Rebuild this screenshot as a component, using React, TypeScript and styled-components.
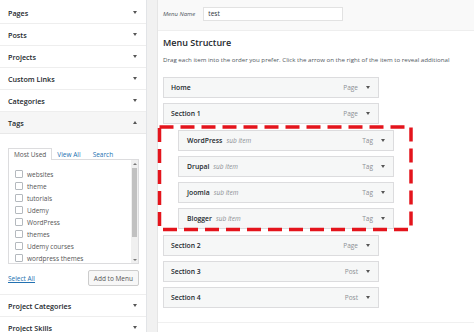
import React, { FC } from "react"
import styled, { createGlobalStyle } from "styled-components"

const GlobalStyle = createGlobalStyle`
  html, body {
    margin: 0;
    padding: 0;
    background: #f1f1f1;
    font-family: "Open Sans", "Noto Sans", sans-serif;
    color: #23282d;
  }
  * { box-sizing: border-box; }
`

const sidebarSections = ["Pages", "Posts", "Projects", "Custom Links", "Categories"]
const tags = [
  "websites",
  "theme",
  "tutorials",
  "Udemy",
  "WordPress",
  "themes",
  "Udemy courses",
  "wordpress themes",
]

interface MenuEntry {
  title: string
  type: string
  sub?: boolean
}

const menuItems: MenuEntry[] = [
  { title: "Home", type: "Page" },
  { title: "Section 1", type: "Page" },
  { title: "WordPress", type: "Tag", sub: true },
  { title: "Drupal", type: "Tag", sub: true },
  { title: "Joomla", type: "Tag", sub: true },
  { title: "Blogger", type: "Tag", sub: true },
  { title: "Section 2", type: "Page" },
  { title: "Section 3", type: "Post" },
  { title: "Section 4", type: "Post" },
]

const Caret: FC<{ up?: boolean }> = ({ up }) => <Arrow $up={up} />

const App: FC = () => {
  return (
    <Page>
      <GlobalStyle />
      <Sidebar>
        {sidebarSections.map(name => (
          <SectionRow key={name}>
            <span>{name}</span>
            <Caret />
          </SectionRow>
        ))}
        <SectionRow $open>
          <span>Tags</span>
          <Caret up />
        </SectionRow>
        <TagsBody>
          <Tabs>
            <Tab $active>Most Used</Tab>
            <Tab>View All</Tab>
            <Tab>Search</Tab>
          </Tabs>
          <TagPanel>
            <TagList>
              {tags.map(tag => (
                <TagItem key={tag}>
                  <Checkbox />
                  {tag}
                </TagItem>
              ))}
            </TagList>
            <Scrollbar>
              <ScrollArrow>
                <Arrow $up $small />
              </ScrollArrow>
              <Thumb />
              <ScrollArrow>
                <Arrow $small />
              </ScrollArrow>
            </Scrollbar>
          </TagPanel>
          <TagActions>
            <SelectAll>Select All</SelectAll>
            <AddButton>Add to Menu</AddButton>
          </TagActions>
        </TagsBody>
        <SectionRow>
          <span>Project Categories</span>
          <Caret />
        </SectionRow>
        <SectionRow>
          <span>Project Skills</span>
          <Caret />
        </SectionRow>
      </Sidebar>

      <Main>
        <Header>
          <NameLabel>Menu Name</NameLabel>
          <NameInput>test</NameInput>
        </Header>
        <Body>
          <Heading>Menu Structure</Heading>
          <Description>
            Drag each item into the order you prefer. Click the arrow on the right of the item to reveal additional
          </Description>
          <ItemList>
            {menuItems.map(item => (
              <MenuItem key={item.title} $sub={item.sub}>
                <ItemTitle>
                  {item.title}
                  {item.sub && <SubNote>sub item</SubNote>}
                </ItemTitle>
                <ItemControls>
                  <ItemType>{item.type}</ItemType>
                  <Caret />
                </ItemControls>
              </MenuItem>
            ))}
          </ItemList>
        </Body>
        <Footer />
      </Main>

      <Highlight width="474" height="332" viewBox="0 0 474 332">
        <rect
          x="159.5"
          y="127"
          width="251.5"
          height="102.5"
          fill="none"
          stroke="#e4141c"
          strokeWidth="3.5"
          strokeDasharray="14 7"
        />
      </Highlight>
    </Page>
  )
}

const Page = styled.div`
  position: relative;
  display: flex;
  gap: 10px;
  width: 474px;
  height: 332px;
  overflow: hidden;
`

const Sidebar = styled.aside`
  flex: 0 0 147px;
  padding-top: 2px;
  background: #fff;
  border-right: 1px solid #e2e4e7;
`

const SectionRow = styled.div<{ $open?: boolean }>`
  display: flex;
  align-items: center;
  justify-content: space-between;
  height: 22px;
  padding: 0 9px 0 8px;
  border-bottom: 1px solid ${p => (p.$open ? "#e8e8e8" : "#eeeeee")};
  background: ${p => (p.$open ? "#f6f6f6" : "#fff")};
  font-size: 7.2px;
  font-weight: 600;
  color: #23282d;
`

const Arrow = styled.i<{ $up?: boolean; $small?: boolean }>`
  display: block;
  width: 0;
  height: 0;
  border-left: ${p => (p.$small ? 2 : 2.5)}px solid transparent;
  border-right: ${p => (p.$small ? 2 : 2.5)}px solid transparent;
  ${p => (p.$up ? "border-bottom" : "border-top")}: ${p => (p.$small ? 2 : 3)}px solid
    ${p => (p.$small ? "#777" : "#555")};
`

const TagsBody = styled.div`
  padding: 13px 7px 8px 8px;
  border-bottom: 1px solid #eeeeee;
`

const Tabs = styled.div`
  display: flex;
  align-items: flex-end;
  gap: 4px;
  height: 12px;
`

const Tab = styled.div<{ $active?: boolean }>`
  position: relative;
  display: flex;
  align-items: center;
  height: 12px;
  margin-bottom: -1px;
  padding: 0 ${p => (p.$active ? 5 : 0)}px;
  font-size: 6.5px;
  color: ${p => (p.$active ? "#555" : "#2271b1")};
  background: ${p => (p.$active ? "#fff" : "transparent")};
  border: 1px solid ${p => (p.$active ? "#dcdcde" : "transparent")};
  border-bottom: none;
  &:last-child {
    margin-left: 6px;
  }
`

const TagPanel = styled.div`
  display: flex;
  height: 105px;
  border: 1px solid #dcdcde;
  background: #fff;
`

const TagList = styled.ul`
  flex: 1;
  margin: 0;
  padding: 8px 0 0 6px;
  list-style: none;
  overflow: hidden;
`

const TagItem = styled.li`
  display: flex;
  align-items: center;
  gap: 4px;
  height: 12px;
  font-size: 6.5px;
  color: #555555;
`

const Checkbox = styled.span`
  width: 8px;
  height: 8px;
  border: 1px solid #b4b9be;
  background: #fff;
  border-radius: 1px;
`

const Scrollbar = styled.div`
  display: flex;
  flex-direction: column;
  width: 7px;
  background: #f0f0f0;
`

const ScrollArrow = styled.div`
  height: 7px;
  display: flex;
  align-items: center;
  justify-content: center;
`

const Thumb = styled.div`
  height: 69px;
  margin: 1px 1px 0;
  background: #c1c1c1;
  flex: 0 0 auto;
  & + div {
    margin-top: auto;
  }
`

const TagActions = styled.div`
  display: flex;
  align-items: center;
  justify-content: space-between;
  margin-top: 6px;
`

const SelectAll = styled.a`
  font-size: 6.5px;
  color: #2271b1;
  text-decoration: underline;
`

const AddButton = styled.button`
  height: 16px;
  padding: 0 5px;
  font-family: inherit;
  font-size: 6.5px;
  color: #555;
  background: #f7f7f7;
  border: 1px solid #cccccc;
  border-radius: 2px;
`

const Main = styled.main`
  flex: 1;
  display: flex;
  flex-direction: column;
  background: #fff;
  border-left: 1px solid #e5e5e5;
`

const Header = styled.div`
  display: flex;
  align-items: center;
  gap: 8px;
  height: 31px;
  padding: 0 0 3px 5px;
  background: #f9f9f9;
  border-bottom: 1px solid #eeeeee;
`

const NameLabel = styled.span`
  font-size: 6px;
  font-style: italic;
  color: #50575e;
`

const NameInput = styled.div`
  width: 140px;
  height: 14px;
  padding: 0 4px;
  display: flex;
  align-items: center;
  font-size: 6.5px;
  color: #2c3338;
  background: #fff;
  border: 1px solid #e2e2e2;
`

const Body = styled.div`
  flex: 1;
  padding: 5px 0 0 5px;
`

const Heading = styled.h3`
  margin: 0;
  height: 14px;
  line-height: 14px;
  font-size: 9px;
  font-weight: 600;
  color: #23282d;
`

const Description = styled.p`
  margin: 5px 0 0;
  height: 10px;
  line-height: 10px;
  font-size: 6.15px;
  white-space: nowrap;
  color: #50575e;
`

const ItemList = styled.div`
  display: flex;
  flex-direction: column;
  gap: 5.3px;
  margin-top: 12px;
`

const MenuItem = styled.div<{ $sub?: boolean }>`
  display: flex;
  align-items: center;
  justify-content: space-between;
  width: 216px;
  height: 21px;
  margin-left: ${p => (p.$sub ? 15 : 0)}px;
  padding: 0 8px 0 ${p => (p.$sub ? 8 : 7)}px;
  background: #f6f7f7;
  border: 1px solid #dcdcde;
`

const ItemTitle = styled.span`
  font-size: 6.8px;
  font-weight: 600;
  color: #23282d;
`

const SubNote = styled.em`
  margin-left: 4px;
  font-size: 6.5px;
  font-weight: 400;
  color: #8c8f94;
`

const ItemControls = styled.span`
  display: flex;
  align-items: center;
  gap: 8px;
`

const ItemType = styled.span`
  font-size: 6.5px;
  color: #8c8f94;
`

const Footer = styled.div`
  height: 10px;
  border-top: 1px solid #f0f0f0;
`

const Highlight = styled.svg`
  position: absolute;
  left: 0;
  top: 0;
  pointer-events: none;
`

export default App
